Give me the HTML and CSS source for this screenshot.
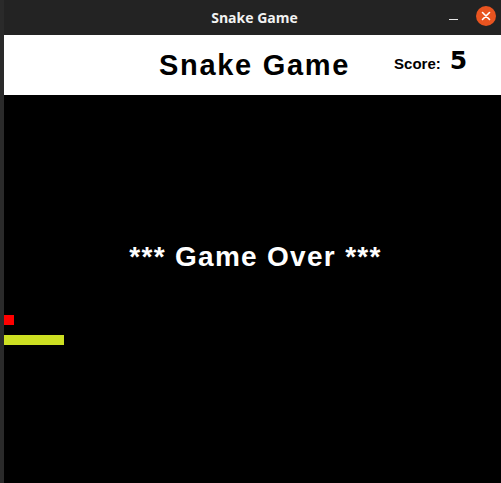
FILE: index.html
```html
<!DOCTYPE html>
<html>
<head>
<meta charset="utf-8">
<link rel="stylesheet" href="styles.css">
</head>
<body>
<div class="desktop">
  <div class="strip"></div>
  <div class="window">
    <div class="titlebar">
      <span class="title">Snake Game</span>
      <div class="controls">
        <span class="minimize"></span>
        <span class="close">
          <svg width="20" height="20" viewBox="0 0 20 20"><circle cx="10" cy="10" r="10" fill="#e95420"/><path d="M6.5 6.5 L13.5 13.5 M13.5 6.5 L6.5 13.5" stroke="#fff" stroke-width="1.6" stroke-linecap="round"/></svg>
        </span>
      </div>
    </div>
    <div class="header">
      <h1 class="heading">Snake Game</h1>
      <div class="score"><span class="score-label">Score:</span><span class="score-value">5</span></div>
    </div>
    <div class="board">
      <div class="gameover">*** Game Over ***</div>
      <div class="food"></div>
      <div class="snake"></div>
    </div>
  </div>
</div>
</body>
</html>
```
FILE: styles.css
```css
html, body {
  margin: 0;
  padding: 0;
  width: 501px;
  height: 483px;
  overflow: hidden;
  background: #1e1e1e;
}
.desktop {
  display: flex;
  height: 483px;
}
.strip {
  width: 4px;
  background: #2a2a2a;
}
.window {
  flex: 1;
  display: flex;
  flex-direction: column;
}
.titlebar {
  height: 35px;
  background: #232323;
  position: relative;
  display: flex;
  align-items: center;
  justify-content: center;
}
.title {
  font-family: "Open Sans", "DejaVu Sans", sans-serif;
  font-weight: 700;
  font-size: 14px;
  color: #f2f2f2;
  margin-left: 4px;
  margin-top: -1px;
}
.controls {
  position: absolute;
  right: 5px;
  top: 6px;
  display: flex;
  align-items: center;
  gap: 18px;
}
.minimize {
  width: 9px;
  height: 1px;
  background: #e6e6e6;
  margin-top: 6px;
}
.close svg { display: block; }
.header {
  height: 60px;
  background: #ffffff;
  position: relative;
  display: flex;
  align-items: center;
}
.heading {
  margin: 0 0 0 155px;
  font-family: "Liberation Sans", Arial, sans-serif;
  font-weight: 700;
  font-size: 29px;
  letter-spacing: 1.7px;
  color: #000;
}
.score {
  margin: 0 0 9px 44px;
  display: flex;
  align-items: baseline;
  gap: 9px;
  font-family: "Liberation Sans", Arial, sans-serif;
  font-weight: 700;
  color: #000;
}
.score-label { font-size: 15px; }
.score-value {
  font-family: "DejaVu Sans", "Liberation Sans", sans-serif;
  font-size: 25px;
}
.board {
  flex: 1;
  background: #000;
  position: relative;
}
.gameover {
  position: absolute;
  left: 0;
  right: 0;
  top: 146px;
  text-align: center;
  font-family: "Liberation Sans", Arial, sans-serif;
  font-weight: 700;
  font-size: 28px;
  letter-spacing: 1.3px;
  color: #fff;
  padding-left: 6px;
}
.food {
  position: absolute;
  left: 0;
  top: 220px;
  width: 10px;
  height: 10px;
  background: #ff0000;
}
.snake {
  position: absolute;
  left: 0;
  top: 240px;
  width: 60px;
  height: 10px;
  background: #cddf22;
}
```
